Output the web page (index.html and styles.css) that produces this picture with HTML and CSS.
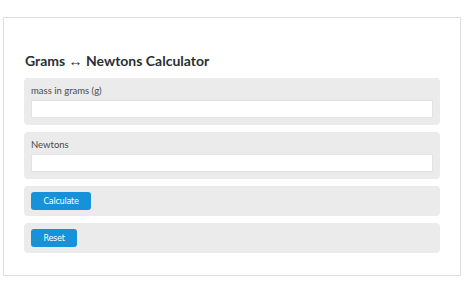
FILE: index.html
```html
<!DOCTYPE html>
<html>
<head>
<meta charset="utf-8">
<link rel="stylesheet" href="styles.css">
</head>
<body>
<div class="page">
  <div class="card">
    <h2 class="title">Grams <span class="arrow">↔</span> Newtons Calculator</h2>
    <div class="row">
      <label class="label">mass in grams (g)</label>
      <input class="field" type="text">
    </div>
    <div class="row">
      <label class="label">Newtons</label>
      <input class="field" type="text">
    </div>
    <div class="row row-btn">
      <button class="btn">Calculate</button>
    </div>
    <div class="row row-btn">
      <button class="btn">Reset</button>
    </div>
  </div>
</div>
</body>
</html>
```
FILE: styles.css
```css
html, body {
  margin: 0;
  padding: 0;
  background: #ffffff;
}
.page {
  padding: 17px 0 0 3px;
}
.card {
  box-sizing: border-box;
  width: 458px;
  height: 259px;
  border: 1px solid #dedede;
  padding: 33px 20px 0 20px;
}
.title {
  margin: 0 0 7px 1px;
  font-family: Lato, sans-serif;
  font-weight: 700;
  font-size: 14px;
  line-height: 20px;
  color: #2b2f33;
}
.arrow {
  font-family: "Open Sans", sans-serif;
  font-weight: 400;
}
.row {
  background: #ebebeb;
  border-radius: 4px;
  padding: 6px 7px 7px;
  margin-bottom: 7px;
  display: flex;
  flex-direction: column;
}
.row-btn {
  padding: 6px 7px;
  flex-direction: row;
}
.label {
  font-family: Lato, sans-serif;
  font-size: 9.5px;
  line-height: 14px;
  color: #4a4a4a;
  margin-bottom: 2px;
}
.field {
  box-sizing: border-box;
  height: 18px;
  width: 100%;
  border: 1px solid #e2e2e2;
  background: #fff;
  margin: 0;
  padding: 0 4px;
}
.btn {
  box-sizing: border-box;
  height: 18px;
  padding: 0 12.5px;
  border: none;
  border-radius: 3px;
  background: #1592d9;
  color: #fff;
  font-family: "DejaVu Sans Condensed", "DejaVu Sans", sans-serif;
  font-stretch: condensed;
  font-size: 9px;
  letter-spacing: -0.3px;
  line-height: 18px;
  cursor: pointer;
}
```
